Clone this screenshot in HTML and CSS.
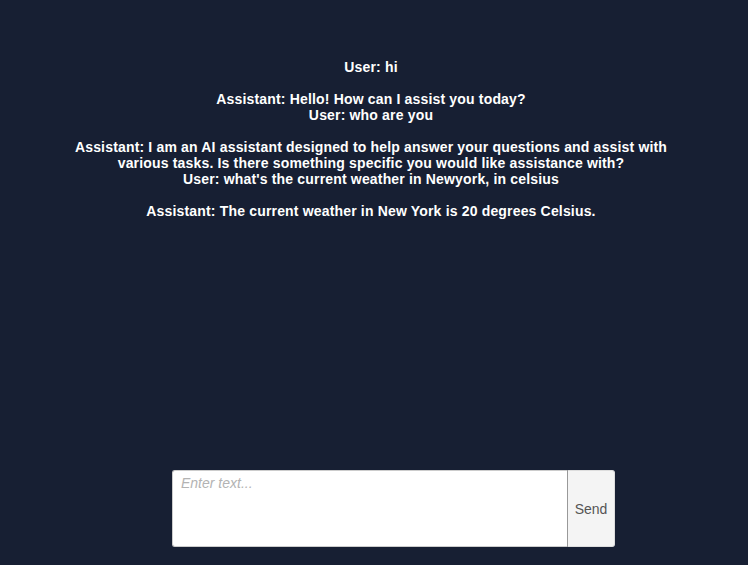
FILE: index.html
```html
<!doctype html>
<html>
<head>
<meta charset="utf-8">
<title>Chat</title>
<link rel="stylesheet" href="styles.css">
</head>
<body>
<div class="app">
	<div class="log">User: hi

Assistant: Hello! How can I assist you today?
User: who are you

Assistant: I am an AI assistant designed to help answer your questions and assist with various tasks. Is there something specific you would like assistance with?
User: what's the current weather in Newyork, in celsius

Assistant: The current weather in New York is 20 degrees Celsius.</div>
	<form class="send" onsubmit="return false">
		<textarea class="input" placeholder="Enter text..."></textarea>
		<button class="btn" type="submit">Send</button>
	</form>
</div>
</body>
</html>
```

FILE: styles.css
```css
*{margin:0;padding:0;box-sizing:border-box}
html,body{height:100%}
body{background:#171f33;font-family:"Liberation Sans",Arial,sans-serif;overflow:hidden}
.app{height:100%;display:flex;flex-direction:column}
.log{flex:1;width:620px;margin:59px 0 0 61px;color:#fff;font-weight:bold;font-size:14px;letter-spacing:0.17px;line-height:16px;text-align:center;white-space:pre-wrap}
.send{display:flex;width:443px;height:77px;margin:0 0 18px 172px}
.input{flex:1;border:1px solid #ccc;border-right:1px solid #999;border-radius:3px 0 0 3px;padding:4px 8px;font-family:"Liberation Sans",Arial,sans-serif;font-size:14px;resize:none;outline:none;background:#fff}
.input::placeholder{color:#b3b3b3;font-style:italic}
.btn{width:47px;border:1px solid #ddd;border-left:0;border-radius:0 3px 3px 0;background:#f4f4f4;color:#555;font-family:"Liberation Sans",Arial,sans-serif;font-size:14px}
```
